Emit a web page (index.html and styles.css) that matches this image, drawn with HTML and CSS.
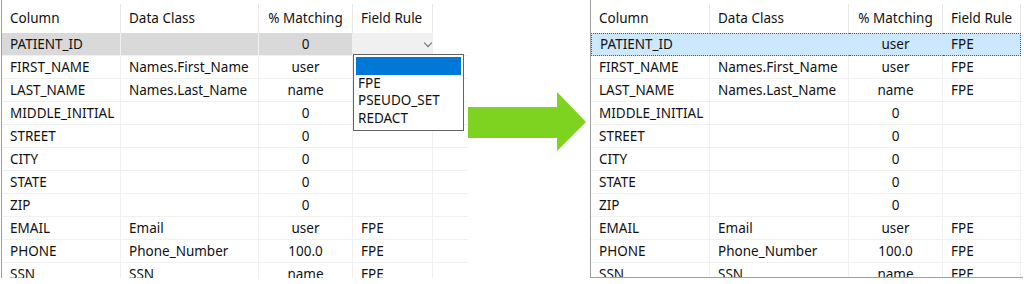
FILE: index.html
```html
<!DOCTYPE html>
<html lang="en">
<head>
<meta charset="UTF-8" />
<title>Field Rule assignment</title>
<link rel="stylesheet" href="styles.css">
</head>
<body>

  <!-- antes: lista desplegable abierta -->
  <div class="grid grid-before">
    <div class="row head">
      <div class="cell">Column</div>
      <div class="cell">Data Class</div>
      <div class="cell num">% Matching</div>
      <div class="cell">Field Rule</div>
      <div class="cell rest"></div>
    </div>
    <div class="row current">
      <div class="cell">PATIENT_ID</div>
      <div class="cell"></div>
      <div class="cell num">0</div>
      <div class="cell combo"><span class="chevron"></span></div>
      <div class="cell rest"></div>
    </div>
    <div class="row"><div class="cell">FIRST_NAME</div><div class="cell">Names.First_Name</div><div class="cell num">user</div><div class="cell"></div><div class="cell rest"></div></div>
    <div class="row"><div class="cell">LAST_NAME</div><div class="cell">Names.Last_Name</div><div class="cell num">name</div><div class="cell"></div><div class="cell rest"></div></div>
    <div class="row"><div class="cell">MIDDLE_INITIAL</div><div class="cell"></div><div class="cell num">0</div><div class="cell"></div><div class="cell rest"></div></div>
    <div class="row"><div class="cell">STREET</div><div class="cell"></div><div class="cell num">0</div><div class="cell"></div><div class="cell rest"></div></div>
    <div class="row"><div class="cell">CITY</div><div class="cell"></div><div class="cell num">0</div><div class="cell"></div><div class="cell rest"></div></div>
    <div class="row"><div class="cell">STATE</div><div class="cell"></div><div class="cell num">0</div><div class="cell"></div><div class="cell rest"></div></div>
    <div class="row"><div class="cell">ZIP</div><div class="cell"></div><div class="cell num">0</div><div class="cell"></div><div class="cell rest"></div></div>
    <div class="row"><div class="cell">EMAIL</div><div class="cell">Email</div><div class="cell num">user</div><div class="cell">FPE</div><div class="cell rest"></div></div>
    <div class="row"><div class="cell">PHONE</div><div class="cell">Phone_Number</div><div class="cell num">100.0</div><div class="cell">FPE</div><div class="cell rest"></div></div>
    <div class="row"><div class="cell">SSN</div><div class="cell">SSN</div><div class="cell num">name</div><div class="cell">FPE</div><div class="cell rest"></div></div>

    <ul class="dropdown">
      <li class="picked">&nbsp;</li>
      <li>FPE</li>
      <li>PSEUDO_SET</li>
      <li>REDACT</li>
    </ul>
  </div>

  <svg class="arrow" width="122" height="284" viewBox="0 0 122 284" aria-hidden="true">
    <polygon points="0,107 89,107 89,92 118,122 89,151 89,138 0,138" fill="#7ed321" />
  </svg>

  <!-- después: regla asignada -->
  <div class="grid grid-after">
    <div class="row head">
      <div class="cell">Column</div>
      <div class="cell">Data Class</div>
      <div class="cell num">% Matching</div>
      <div class="cell">Field Rule</div>
      <div class="cell rest"></div>
    </div>
    <div class="row selected"><div class="cell">PATIENT_ID</div><div class="cell"></div><div class="cell num">user</div><div class="cell">FPE</div><div class="cell rest"></div></div>
    <div class="row"><div class="cell">FIRST_NAME</div><div class="cell">Names.First_Name</div><div class="cell num">user</div><div class="cell">FPE</div><div class="cell rest"></div></div>
    <div class="row"><div class="cell">LAST_NAME</div><div class="cell">Names.Last_Name</div><div class="cell num">name</div><div class="cell">FPE</div><div class="cell rest"></div></div>
    <div class="row"><div class="cell">MIDDLE_INITIAL</div><div class="cell"></div><div class="cell num">0</div><div class="cell"></div><div class="cell rest"></div></div>
    <div class="row"><div class="cell">STREET</div><div class="cell"></div><div class="cell num">0</div><div class="cell"></div><div class="cell rest"></div></div>
    <div class="row"><div class="cell">CITY</div><div class="cell"></div><div class="cell num">0</div><div class="cell"></div><div class="cell rest"></div></div>
    <div class="row"><div class="cell">STATE</div><div class="cell"></div><div class="cell num">0</div><div class="cell"></div><div class="cell rest"></div></div>
    <div class="row"><div class="cell">ZIP</div><div class="cell"></div><div class="cell num">0</div><div class="cell"></div><div class="cell rest"></div></div>
    <div class="row"><div class="cell">EMAIL</div><div class="cell">Email</div><div class="cell num">user</div><div class="cell">FPE</div><div class="cell rest"></div></div>
    <div class="row"><div class="cell">PHONE</div><div class="cell">Phone_Number</div><div class="cell num">100.0</div><div class="cell">FPE</div><div class="cell rest"></div></div>
    <div class="row"><div class="cell">SSN</div><div class="cell">SSN</div><div class="cell num">name</div><div class="cell">FPE</div><div class="cell rest"></div></div>
  </div>

</body>
</html>
```

FILE: styles.css
```css
/* BASE */
* {
  box-sizing: border-box;
}
body {
  margin: 0;
  width: 1024px;
  height: 284px;
  overflow: hidden;
  display: flex;
  align-items: flex-start;
  background: #fff;
  font-family: 'Noto Sans', 'Open Sans', sans-serif;
  font-size: 13.5px;
  color: #111;
}

/* TABLAS */
.grid {
  position: relative;
  height: 278px;
  overflow: hidden;
  border-left: 1px solid #a0a0a0;
}
.grid-before {
  width: 467px;
  margin-left: 1px;
}
.grid-after {
  width: 433px;
  border-bottom: 1px solid #a0a0a0;
}
.grid-before .row {
  display: grid;
  grid-template-columns: 119px 138px 94px 80px 1fr;
}
.grid-after .row {
  display: grid;
  grid-template-columns: 119px 139px 94px 78px 1fr;
}

.row {
  height: 23px;
  border-bottom: 1px solid #f0f0f0;
}
.cell {
  padding: 0 8px;
  line-height: 22px;
  white-space: nowrap;
  border-right: 1px solid #f0f0f0;
}
.cell.num {
  text-align: center;
}
.cell.rest {
  border-right: none;
}

.row.head {
  height: 33px;
  padding-top: 4px;
  border-bottom: none;
}
.row.head .cell {
  line-height: 29px;
  border-right-color: #e8e8e8;
}

/* FILA ACTIVA (izquierda) */
.row.current .cell {
  background: #d9d9d9;
}
.row.current .cell.combo {
  position: relative;
  background: #f0f0f0;
  border-right: none;
}
.row.current .cell.rest {
  background: #fff;
}
.chevron {
  position: absolute;
  right: 2px;
  top: 7px;
  width: 6px;
  height: 6px;
  border-right: 1.5px solid #6a6a6a;
  border-bottom: 1.5px solid #6a6a6a;
  transform: rotate(45deg);
}

/* LISTA DESPLEGABLE */
.dropdown {
  position: absolute;
  left: 351px;
  top: 54px;
  width: 111px;
  margin: 0;
  padding: 2px 2px 3px;
  list-style: none;
  background: #fff;
  border: 1px solid #646464;
}
.dropdown li {
  height: 17.5px;
  line-height: 17px;
  padding: 0 2px;
}
.dropdown li.picked {
  background: #0078d7;
}

/* FLECHA */
.arrow {
  display: block;
  flex: none;
}

/* FILA SELECCIONADA (derecha) */
.row.selected .cell {
  background: #cce8ff;
  border-top: 1px dotted #555;
  border-bottom: 1px dotted #555;
  border-right-color: transparent;
}
.row.selected .cell:first-child {
  border-left: 1px dotted #555;
}
.row.selected .cell:nth-child(4) {
  border-right: 1px dotted #555;
}
.row.selected .cell.rest {
  background: #fff;
  border-top: none;
  border-bottom: none;
}
.row.selected .cell {
  line-height: 20px;
}
.row.selected {
  border-bottom: none;
}
```
